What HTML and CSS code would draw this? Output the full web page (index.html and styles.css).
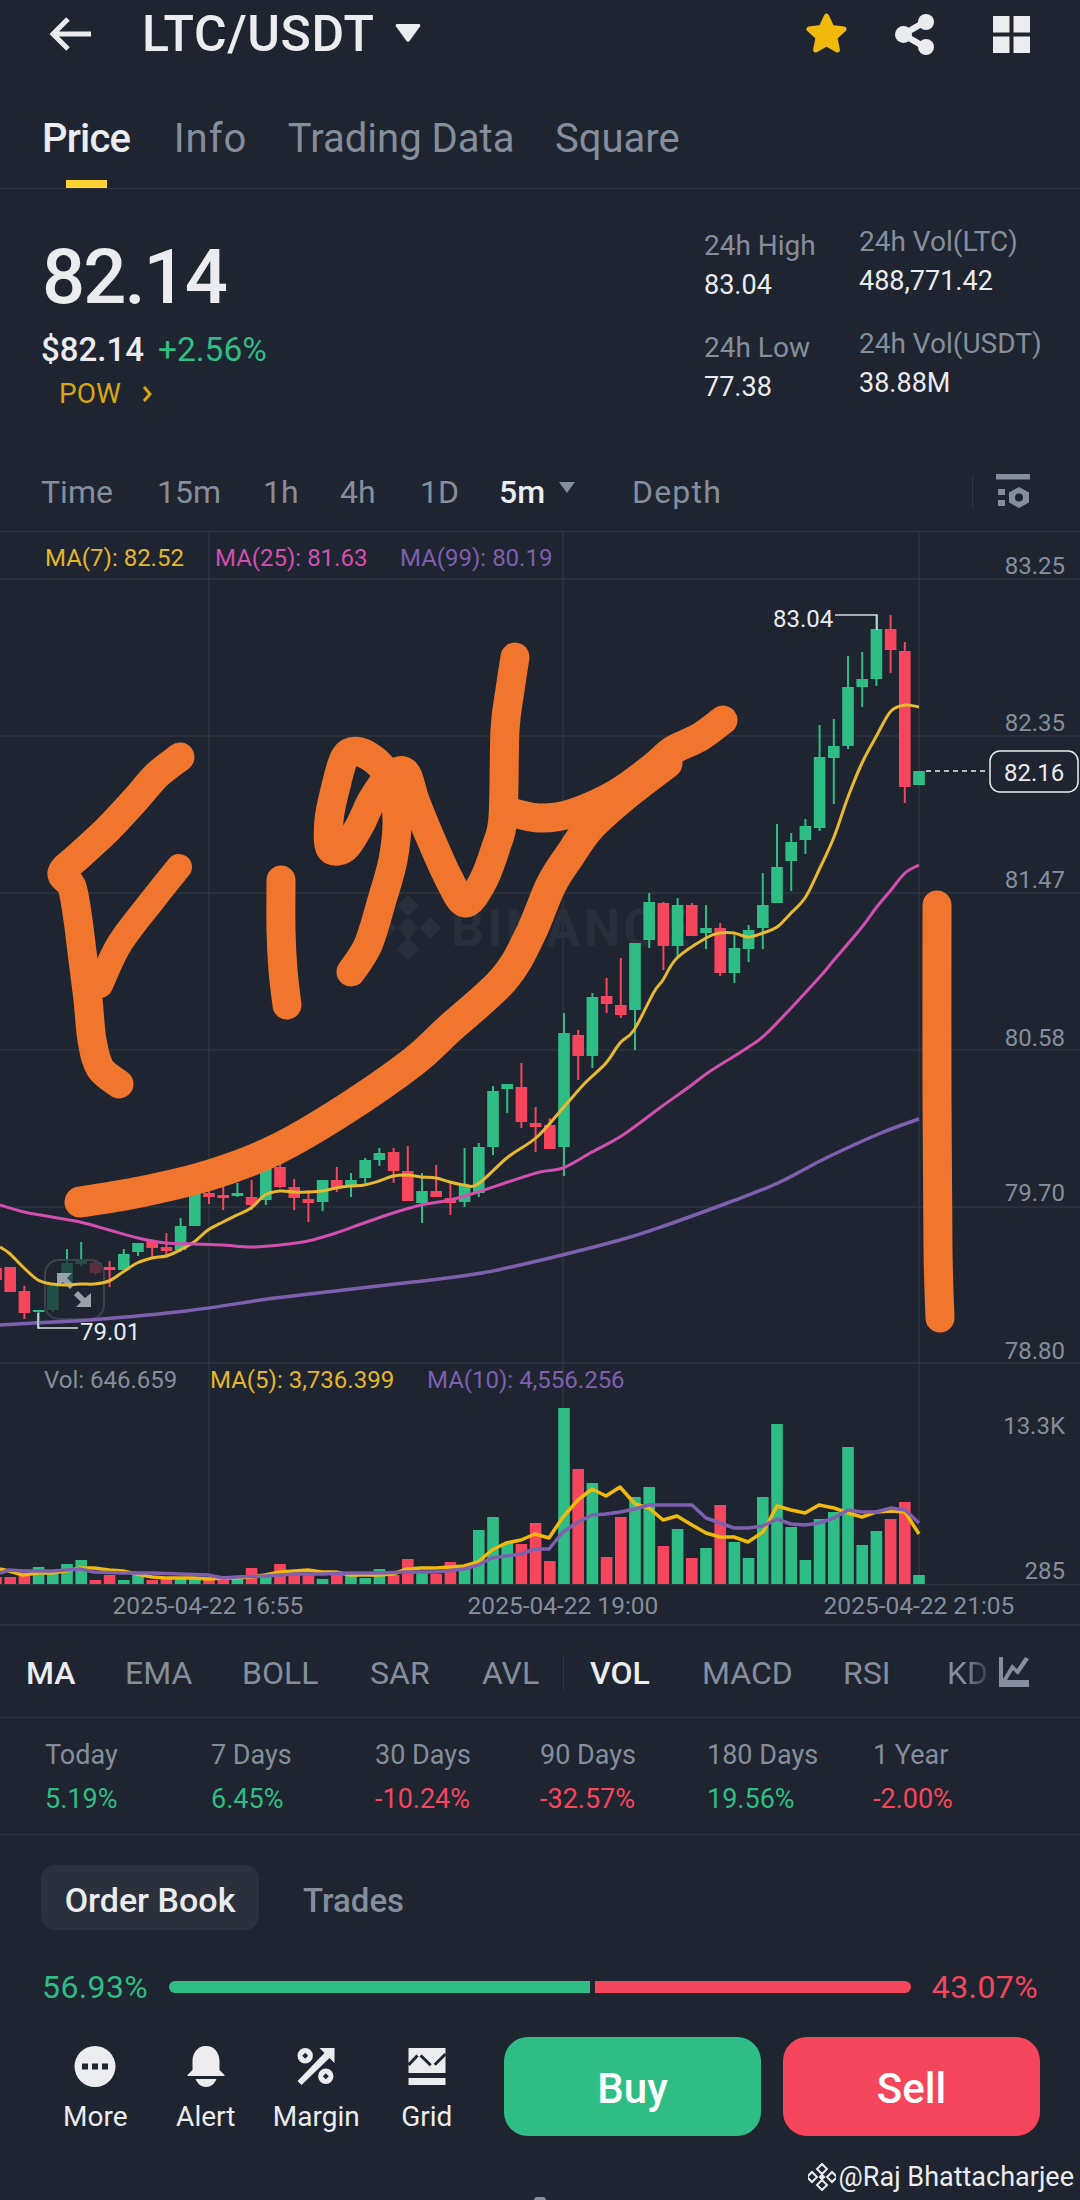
FILE: index.html
```html
<!DOCTYPE html>
<html lang="en">
<head>
<meta charset="utf-8">
<title>LTC/USDT</title>
<link rel="stylesheet" href="styles.css">
</head>
<body>
<div class="app">
  <header class="topbar">
    <svg class="ico back" viewBox="0 0 44 36"><path d="M42 18H5M19 3 4 18l15 15" fill="none" stroke="#eaecef" stroke-width="5"/></svg>
    <h1 class="pair">LTC/USDT</h1>
    <svg class="ico caret" viewBox="0 0 26 20"><path d="M2 1h22a1.500 1.500 0 0 1 1 2.500L14.500 18a2 2 0 0 1-3 0L1 3.500A1.500 1.500 0 0 1 2 1z" fill="#eaecef"/></svg>
    <span class="spacer"></span>
    <svg class="ico star" viewBox="0 0 41 42"><path d="M20.500 3l5.300 11.600 12.200 1.500-9 8.400 2.400 12.500-10.900-6.200L9.600 37l2.400-12.500-9-8.400 12.200-1.500z" fill="#f0b90b" stroke="#f0b90b" stroke-width="5" stroke-linejoin="round"/></svg>
    <svg class="ico share" viewBox="0 0 39 41"><g fill="#eaecef"><circle cx="31" cy="8" r="8"/><circle cx="8.500" cy="20.500" r="8.500"/><circle cx="31" cy="33" r="8"/><path d="M29.500 4.500l3 5.500L10 23l-3-5.500zM10 18l22.500 13-3 5.500L7 23.500z"/></g></svg>
    <svg class="ico apps" viewBox="0 0 37 37"><g fill="#eaecef"><rect width="16.500" height="16.500"/><rect x="20.500" width="16.500" height="16.500"/><rect y="20.500" width="16.500" height="16.500"/><rect x="20.500" y="20.500" width="16.500" height="16.500"/></g></svg>
  </header>

  <nav class="tabs">
    <a class="tab on">Price</a>
    <a class="tab info">Info</a>
    <a class="tab data">Trading Data</a>
    <a class="tab">Square</a>
  </nav>

  <section class="ticker">
    <div class="quote">
      <div class="last">82.14</div>
      <div class="fiat"><span class="usd">$82.14</span><span class="up">+2.56%</span></div>
      <div class="tag">POW<svg class="chev" viewBox="0 0 10 18"><path d="M2 2l6 7-6 7" fill="none" stroke="#d9a514" stroke-width="3"/></svg></div>
    </div>
    <div class="stats">
      <div class="stat"><span class="k">24h High</span><span class="v">83.04</span></div>
      <div class="stat shift"><span class="k">24h Vol(LTC)</span><span class="v">488,771.42</span></div>
      <div class="stat"><span class="k">24h Low</span><span class="v">77.38</span></div>
      <div class="stat shift"><span class="k">24h Vol(USDT)</span><span class="v">38.88M</span></div>
    </div>
  </section>

  <div class="intervals">
    <span class="iv w-time">Time</span>
    <span class="iv w-15">15m</span>
    <span class="iv w-1h">1h</span>
    <span class="iv w-4h">4h</span>
    <span class="iv w-1d">1D</span>
    <span class="iv now">5m</span>
    <svg class="tri" viewBox="0 0 18 13"><path d="M1 1h16L9 12z" fill="#848e9c"/></svg>
    <span class="iv depth">Depth</span>
    <span class="spacer"></span>
    <i class="vr"></i>
    <svg class="cfg" viewBox="0 0 34 34"><g fill="#848e9c"><rect width="34" height="5.500"/><rect x="2" y="15" width="7" height="6"/><rect x="2" y="26" width="7" height="6"/><path fill-rule="evenodd" d="M23 13l10 5.500v10L23 34l-10-5.500v-10zm0 6.500a4 4 0 1 0 0 8 4 4 0 0 0 0-8z"/></g></svg>
  </div>

  <svg class="chart" viewBox="0 532 1080 1094">
    <g class="grid">
      <path d="M0 579H1080M0 736H1080M0 893H1080M0 1050H1080M0 1207H1080M0 1363H1080M0 1584.500H1080M0 1625H1080"/>
      <path d="M209 532V1584M563 532V1584M919 532V1584"/>
    </g>
    <g class="wm">
      <path d="M408 895l11 11-11 11-11-11zM408 938l11 11-11 11-11-11zM386 917l11 11-11 11-11-11zM430 917l11 11-11 11-11-11zM408 917l11 11-11 11-11-11z"/>
      <text x="451" y="946">BINANCE</text>
    </g>

    <g id="vol"></g>
    <polyline class="ln y" points="919,1534 905,1512 891,1511 876,1512 862,1517 848,1513 834,1508 819,1505 805,1513 791,1510 777,1506 763,1532 748,1542 734,1537 720,1537 706,1533 692,1525 677,1516 663,1520 649,1508 635,1504 620,1487 606,1496 592,1489 578,1500 563,1517 549,1538 535,1534 521,1540 506,1543 492,1550 478,1562 464,1566 450,1567 436,1568 421,1568 407,1569 393,1574 379,1575 364,1575 350,1575 336,1572 322,1572 308,1570 294,1571 280,1572 265,1575 251,1577 237,1578 223,1578 208,1579 194,1578 180,1578 166,1578 152,1577 137,1574 123,1571 109,1570 94,1568 80,1568 66,1571 52,1573 38,1573 23,1575 9,1571 0,1569"/>
    <polyline class="ln p" points="919,1523 905,1510 891,1508 876,1512 862,1512 848,1510 834,1518 819,1523 805,1525 791,1524 777,1519 763,1526 748,1528 734,1528 720,1523 706,1518 692,1505 677,1505 663,1505 649,1505 635,1509 620,1512 606,1514 592,1515 578,1522 563,1532 549,1549 535,1549 521,1554 506,1556 492,1558 478,1565 464,1569 436,1572 407,1572 379,1573 350,1573 322,1574 294,1574 265,1576 237,1577 223,1578 208,1575 180,1574 152,1573 123,1573 94,1572 80,1569 52,1571 23,1571 9,1570 0,1573"/>
    <g id="candles"></g>
    <rect class="fs" x="45" y="1260" width="59" height="59" rx="14"/>
    <g class="fsa"><path d="M57 1273h15l-5 5 7 7-4 4-7-7-6 5zM91 1307H76l5-5-7-7 4-4 7 7 6-5z"/></g>
    <polyline class="ln2 y" points="919,707 905,705 891,711 877,735 862,763 848,797 834,837 819,870 805,898 791,913 777,927 763,933 748,937 734,933 720,933 706,938 677,958 663,980 654,992 634,1030 620,1043 606,1063 585,1083 563,1108 537,1137 508,1157 478,1184 464,1185 450,1182 436,1178 421,1177 407,1175 393,1176 379,1181 364,1185 350,1186 336,1188 322,1191 308,1192 294,1192 280,1191 265,1195 251,1208 237,1215 223,1222 208,1230 194,1242 180,1250 166,1256 152,1258 137,1263 123,1272 109,1281 94,1284 80,1284 66,1285 52,1284 38,1280 23,1267 9,1253 0,1247"/>
    <polyline class="ln2 m" points="919,865 905,873 891,890 876,908 862,927 834,960 817,980 768,1032 747,1048 709,1072 689,1087 661,1107 623,1135 592,1152 563,1168 540,1172 508,1182 478,1192 450,1200 421,1205 393,1213 364,1223 336,1233 308,1241 280,1245 251,1247 223,1245 194,1244 166,1243 138,1238 109,1230 80,1222 52,1217 24,1212 0,1205"/>
    <polyline class="ln2 v" points="919,1119 881,1133 826,1158 778,1183 730,1202 661,1227 620,1240 558,1256 482,1273 413,1282 344,1290 275,1298 186,1311 90,1320 34,1323 0,1325"/>

    <path class="hl" d="M835 615H877V630"/>
    <path class="hl" d="M38 1313V1328H78"/>
    <path class="dash" d="M926 771H988"/>
    <rect class="box" x="990" y="751" width="88" height="41" rx="10"/>
    <g class="t-white">
      <text x="773" y="627">83.04</text>
      <text x="80" y="1340">79.01</text>
      <text x="1004" y="781">82.16</text>
    </g>
    <g class="t-axis">
      <text x="1065" y="574">83.25</text>
      <text x="1065" y="731">82.35</text>
      <text x="1065" y="888">81.47</text>
      <text x="1065" y="1046">80.58</text>
      <text x="1065" y="1201">79.70</text>
      <text x="1065" y="1359">78.80</text>
      <text x="1065" y="1434">13.3K</text>
      <text x="1065" y="1579">285</text>
    </g>
    <g class="t-leg">
      <text x="45" y="566" class="cy">MA(7): 82.52</text>
      <text x="215" y="566" class="cm">MA(25): 81.63</text>
      <text x="400" y="566" class="cv">MA(99): 80.19</text>
      <text x="44" y="1388" class="cg">Vol: 646.659</text>
      <text x="210" y="1388" class="cy">MA(5): 3,736.399</text>
      <text x="427" y="1388" class="cv">MA(10): 4,556.256</text>
    </g>
    <g class="t-date">
      <text x="208" y="1614">2025-04-22 16:55</text>
      <text x="563" y="1614">2025-04-22 19:00</text>
      <text x="919" y="1614">2025-04-22 21:05</text>
    </g>

    <g class="ink">
      <path d="M180 757 157 775 135 800 107 830 80 855 62 873 72 887 78 920 83 960 88 1000 92 1040 100 1068 119 1084"/>
      <path class="thin" d="M179 867 155 897 120 943 100 985"/>
      <path d="M281 880 281 930 283 970 287 1005"/>
      <path d="M351 972 368 945 382 900 393 860 397 820 392 785 380 765 360 752 345 757 335 790 329 820 330 848 345 848 360 825 372 800 388 778 405 772 415 800 427 830 448 877 465 903 482 883 496 847 503 817 505 730 510 690 515 657"/>
      <path d="M510 812 540 818 573 813 617 793 653 767 673 750 700 737 723 720"/>
      <path class="big" d="M80 1202 140 1192 210 1175 275 1150 344 1110 413 1062 448 1030 503 980 530 935 551 885 570 855 590 827 623 797 667 763"/>
      <path class="wide" d="M937 905 937 1100 938 1250 940 1318"/>
    </g>
  </svg>

  <div class="inds">
    <span class="ind on i-ma">MA</span>
    <span class="ind i-ema">EMA</span>
    <span class="ind i-boll">BOLL</span>
    <span class="ind i-sar">SAR</span>
    <span class="ind i-avl">AVL</span>
    <i class="vr tall"></i>
    <span class="ind on i-vol">VOL</span>
    <span class="ind i-macd">MACD</span>
    <span class="ind i-rsi">RSI</span>
    <span class="ind i-kd">KD</span>
    <svg class="mtn" viewBox="0 0 30 30"><g fill="#848e9c"><path d="M0 0h4v22l9-15 5 5L26 0l4 2-11 16-5-5-6 10h22v7H0z"/></g></svg>
  </div>

  <div class="perf">
    <div class="pc"><span class="k">Today</span><span class="up">5.19%</span></div>
    <div class="pc"><span class="k">7 Days</span><span class="up">6.45%</span></div>
    <div class="pc"><span class="k">30 Days</span><span class="dn">-10.24%</span></div>
    <div class="pc"><span class="k">90 Days</span><span class="dn">-32.57%</span></div>
    <div class="pc"><span class="k">180 Days</span><span class="up">19.56%</span></div>
    <div class="pc"><span class="k">1 Year</span><span class="dn">-2.00%</span></div>
  </div>

  <div class="book">
    <span class="pill">Order Book</span>
    <span class="trades">Trades</span>
  </div>

  <div class="ratio">
    <span class="up">56.93%</span>
    <div class="bar"><i class="bid"></i><i class="ask"></i></div>
    <span class="dn">43.07%</span>
  </div>

  <div class="actions">
    <div class="act">
      <svg class="aico" viewBox="0 0 42 42"><circle cx="21" cy="20.500" r="20.500" fill="#eaecef"/><g fill="#1e2530"><rect x="8" y="17.500" width="6" height="6"/><rect x="18" y="17.500" width="6" height="6"/><rect x="28" y="17.500" width="6" height="6"/></g></svg>
      <span>More</span>
    </div>
    <div class="act">
      <svg class="aico" viewBox="0 0 42 42"><g fill="#eaecef" transform="translate(2.500 0)"><path d="M18.500 0C28 0 32 8 32 15v9l5 5v1H0v-1l5-5v-9C5 8 9 0 18.500 0z"/><path d="M8 33h21c-2 5-6 8-10.500 8S10 38 8 33z"/></g></svg>
      <span>Alert</span>
    </div>
    <div class="act">
      <svg class="aico" viewBox="0 0 42 42"><g fill="#eaecef" transform="translate(2.500 2)"><path fill-rule="evenodd" d="M7.700 0a7.700 7.700 0 1 1 0 15.400A7.700 7.700 0 0 1 7.700 0zm0 4.700l3 3-3 3-3-3zM28.300 20.600a7.700 7.700 0 1 1 0 15.400 7.700 7.700 0 0 1 0-15.400zm0 4.700l3 3-3 3-3-3z"/><path d="M22 0h15v15l-5-5L4 37l-4-4L27 5z"/></g></svg>
      <span>Margin</span>
    </div>
    <div class="act">
      <svg class="aico" viewBox="0 0 42 42"><g transform="translate(2.500 2)"><path d="M0 0h37v25H0zM0 30h37v7H0z" fill="#eaecef"/><path d="M0 17 10.500 6 24 19 37 6" fill="none" stroke="#1e2530" stroke-width="3"/><path d="M10.500 2l3.500 3.500-3.500 3.500L7 5.500zM24.500 15l3.500 3.500-3.500 3.500-3.500-3.500z" fill="#eaecef"/></g></svg>
      <span>Grid</span>
    </div>
    <button class="btn buy">Buy</button>
    <button class="btn sell">Sell</button>
  </div>

  <div class="mark">
    <svg class="logo" viewBox="0 0 28 28"><path d="M14 1l5 5-5 5-5-5zM14 17l5 5-5 5-5-5zM4 9l5 5-5 5-5-5zM24 9l5 5-5 5-5-5z" fill="none" stroke="#eaecef" stroke-width="2"/><path d="M14 10.500l3.500 3.500-3.500 3.500-3.500-3.500z" fill="#eaecef"/></svg>
    <span>@Raj Bhattacharjee</span>
  </div>
  <i class="home"></i>
</div>
<script src="chart.js"></script>
</body>
</html>
```

FILE: styles.css
```css
* { box-sizing: border-box; }
html, body { margin: 0; padding: 0; background: #1e2530; }
body { font-family: Roboto, "Noto Sans", sans-serif; color: #eaecef; }
.app { position: relative; width: 1080px; height: 2200px; overflow: hidden; }
.spacer { flex: 1; }
.ico { display: block; flex: none; }
.home { position: absolute; left: 534px; bottom: 0; width: 12px; height: 3px; border-radius: 6px 6px 0 0; background: #848e9c; }

.topbar { height: 68px; display: flex; align-items: center; padding: 0 50px 0 49px; }
.back { width: 44px; height: 36px; }
.pair { margin: 0 0 0 49px; font-size: 50px; font-weight: 500; letter-spacing: .6px; line-height: 68px; }
.caret { width: 26px; height: 20px; margin-left: 20px; margin-bottom: 2px; }
.star { width: 41px; height: 42px; margin-right: 48px; }
.share { width: 39px; height: 41px; margin-right: 59px; }
.apps { width: 37px; height: 37px; }

.tabs { height: 121px; display: flex; gap: 40.500px; padding: 0 42px; border-bottom: 1px solid #2e3540; align-items: flex-start; }
.tab { position: relative; font-size: 40px; line-height: 48px; margin-top: 47px; color: #848e9c; }
.tab.on { color: #eaecef; font-weight: 500; letter-spacing: -.8px; margin-right: 3px; }
.tab.info { letter-spacing: 1px; }
.tab.data { letter-spacing: 0; }
.tab.on::after { content: ""; position: absolute; left: 24px; top: 65px; width: 41px; height: 8px; background: #fcd535; }

.ticker { height: 260px; display: flex; justify-content: space-between; padding: 0 0 0 42px; }
.last { font-size: 76px; font-weight: 500; line-height: 76px; margin-top: 50px; letter-spacing: -2px; }
.fiat { display: flex; gap: 14px; font-size: 33.500px; line-height: 40px; margin: 15px 0 0 -1px; }
.fiat .usd { font-weight: 500; font-size: 33px; }
.fiat .up { color: #2ebd85; }
.tag { display: flex; align-items: center; gap: 21px; margin: 6px 0 0 17px; color: #d9a514; font-size: 28px; line-height: 36px; }
.chev { width: 10px; height: 18px; }
.stats { display: grid; grid-template-columns: 155px 221px; grid-auto-rows: 102px; margin-top: 39px; width: 376px; }
.stat { display: flex; flex-direction: column; gap: 4px; }
.stat.shift { margin-top: -4px; }
.stat .k { font-size: 28px; line-height: 36px; color: #848e9c; }
.stat .v { font-size: 27px; line-height: 34px; color: #eaecef; }

.intervals { height: 83px; display: flex; align-items: center; padding: 3px 50px 0 41px; border-bottom: 1px solid #2e3540; font-size: 32px; color: #848e9c; }
.iv { line-height: 40px; }
.w-time { width: 116px; }
.w-15 { width: 106px; }
.w-1h { width: 77px; }
.w-4h { width: 80px; }
.w-1d { width: 79px; }
.now { width: 59px; color: #eaecef; font-weight: 500; }
.tri { width: 18px; height: 13px; margin-top: -8px; }
.depth { margin-left: 56px; letter-spacing: 1.2px; }
.vr { display: block; width: 1px; height: 34px; background: #2e3540; }
.cfg { width: 34px; height: 34px; margin-left: 23px; margin-top: -2px; }

.chart { display: block; width: 1080px; height: 1094px; font-family: Roboto, sans-serif; }
.grid path { stroke: #2e3540; stroke-width: 1.500; fill: none; }
.wm path { fill: #282f3a; }
.wm text { font-size: 52px; font-weight: 700; fill: #282f3a; letter-spacing: 3px; }
.ln, .ln2 { fill: none; stroke-width: 3; stroke-linejoin: round; }
.ln { stroke-width: 3.500; }
.y { stroke: #f0b90b; }
.ln2.y { stroke: #e8b92e; }
.p { stroke: #7e5fb0; }
.m { stroke: #d24fb0; }
.v { stroke: #7e5fb0; stroke-width: 3.500; }
.fs { fill: rgba(30, 37, 48, .72); stroke: #3a424c; stroke-width: 2; }
.fsa path { fill: #99a2ab; }
.hl { fill: none; stroke: #d8dce0; stroke-width: 1.500; }
.dash { stroke: #eaecef; stroke-width: 1.500; stroke-dasharray: 5 4; }
.box { fill: #1e2530; stroke: #eaecef; stroke-width: 1.500; }
.t-white text { font-size: 24px; fill: #eaecef; }
.t-axis text { font-size: 24px; fill: #848e9c; text-anchor: end; }
.t-leg text { font-size: 24px; }
.t-date text { font-size: 24.500px; fill: #848e9c; text-anchor: middle; }
.cy { fill: #e5b52c; }
.cm { fill: #d24fb0; }
.cv { fill: #7e5fb0; }
.cg { fill: #848e9c; }
.ink path { fill: none; stroke: #f0762d; stroke-width: 29; stroke-linecap: round; stroke-linejoin: round; }
.ink .thin { stroke-width: 26; }
.ink .wide { stroke-width: 29; }
.ink .big { stroke-width: 31; }
.cg-up { fill: #2ebd85; stroke: #2ebd85; stroke-width: 0; }
.cg-dn { fill: #f6465d; stroke: #f6465d; stroke-width: 0; }

.inds { height: 92px; display: flex; align-items: center; position: relative; padding: 2px 0 0 26px; border-bottom: 1px solid #2e3540; font-size: 32px; color: #848e9c; }
.ind { line-height: 40px; flex: none; }
.ind.on { color: #eaecef; font-weight: 500; }
.i-ma { width: 99px; }
.i-ema { width: 117px; }
.i-boll { width: 128px; }
.i-sar { width: 112px; }
.i-avl { width: 81px; }
.vr.tall { margin-right: 26px; }
.i-vol { width: 112px; }
.i-macd { width: 141px; }
.i-rsi { width: 104px; }
.i-kd { width: 44px; background: linear-gradient(90deg, #848e9c 40%, #2a313c); -webkit-background-clip: text; background-clip: text; color: transparent; }
.mtn { width: 30px; height: 30px; margin-left: 8px; margin-top: -2px; }

.perf { height: 117px; display: grid; grid-template-columns: 166px 164px 165px 167px 166px 150px; padding: 20px 0 0 45px; border-bottom: 1px solid #2e3540; font-size: 27px; }
.pc { display: flex; flex-direction: column; gap: 10px; }
.pc .k { color: #848e9c; line-height: 34px; }
.pc span { line-height: 34px; }
.up { color: #2ebd85; }
.dn { color: #f6465d; }

.book { display: flex; align-items: flex-start; gap: 44px; padding: 30px 0 0 41px; }
.pill { width: 218px; height: 65px; border-radius: 14px; background: #2a313c; display: flex; align-items: center; justify-content: center; padding-top: 4px; font-size: 34px; font-weight: 500; }
.trades { height: 65px; padding-top: 2px; font-size: 33px; font-weight: 500; color: #848e9c; line-height: 67px; }

.ratio { display: flex; align-items: center; gap: 21px; padding: 0 42px; height: 40px; margin-top: 37px; font-size: 32px; letter-spacing: .4px; }
.bar { flex: 1; display: flex; gap: 5px; height: 12px; }
.bid { flex: 419 1 0; background: #2ebd85; border-radius: 6px 0 0 6px; }
.ask { flex: 315 1 0; background: #f6465d; border-radius: 0 6px 6px 0; }

.actions { display: flex; align-items: flex-start; margin-top: 30px; padding-left: 40px; height: 99px; }
.act { width: 110.500px; display: flex; flex-direction: column; align-items: center; padding-top: 9px; font-size: 28px; color: #eaecef; flex: none; }
.act span { line-height: 34px; margin-top: 12px; }
.aico { width: 42px; height: 42px; display: block; }
.btn { width: 257px; height: 99px; border: 0; border-radius: 24px; padding-top: 4px; font: 500 42px Roboto, sans-serif; color: #fff; flex: none; }
.buy { background: #2ebd85; margin-left: 22px; }
.sell { background: #f6465d; margin-left: 22px; }

.mark { display: flex; align-items: center; justify-content: flex-end; gap: 3px; padding-right: 6px; margin-top: 22px; font-size: 27px; line-height: 38px; }
.logo { width: 28px; height: 28px; }
```

FILE: chart.js
```js
// Candles and volume, newest first; each sits one slot (14.2px) to the left of the previous.
var SLOT = 14.2, LAST_X = 919, BASE = 1584;
var candles = [
 [771,785,771,785,'g'],[651,787,642,803,'r'],[629,650,615,673,'r'],[629,679,615,686,'g'],[679,687,652,707,'g'],
 [687,746,656,749,'g'],[746,758,719,804,'g'],[757,828,725,831,'g'],[826,840,819,854,'g'],[842,861,833,891,'g'],
 [867,903,824,903,'g'],[905,928,873,949,'g'],[930,949,925,962,'g'],[948,973,935,983,'g'],[928,973,923,976,'r'],
 [928,933,905,949,'g'],[905,936,903,936,'r'],[905,946,898,957,'g'],[903,946,902,970,'r'],[902,940,893,948,'g'],
 [943,1010,943,1050,'g'],[1005,1015,958,1018,'r'],[996,1004,978,1013,'r'],[997,1056,993,1068,'g'],[1035,1056,1030,1080,'r'],
 [1033,1147,1013,1176,'g'],[1125,1149,1118,1149,'r'],[1123,1127,1107,1152,'r'],[1087,1122,1063,1128,'r'],[1084,1089,1084,1113,'g'],
 [1091,1147,1086,1155,'g'],[1147,1193,1143,1197,'g'],[1185,1202,1148,1207,'g'],[1198,1203,1183,1215,'r'],[1191,1197,1165,1197,'r'],
 [1191,1203,1173,1223,'g'],[1171,1201,1146,1201,'r'],[1152,1171,1148,1183,'r'],[1153,1160,1148,1166,'g'],[1160,1178,1158,1183,'g'],
 [1180,1185,1173,1197,'g'],[1180,1187,1167,1192,'r'],[1180,1202,1180,1211,'g'],[1199,1203,1190,1222,'r'],[1187,1198,1179,1210,'r'],
 [1167,1187,1162,1188,'r'],[1167,1200,1160,1205,'g'],[1197,1205,1180,1210,'r'],[1193,1196,1183,1197,'g'],[1195,1198,1183,1210,'r'],
 [1193,1197,1187,1204,'r'],[1193,1226,1193,1226,'g'],[1226,1250,1218,1252,'g'],[1247,1251,1233,1258,'r'],[1241,1248,1241,1257,'r'],
 [1243,1252,1243,1256,'g'],[1254,1270,1249,1270,'g'],[1267,1270,1261,1287,'r'],[1263,1273,1260,1275,'r'],[1260,1264,1242,1266,'g'],
 [1263,1283,1249,1283,'g'],[1283,1310,1283,1312,'g'],[1310,1312,1310,1328,'g'],[1291,1313,1286,1319,'r'],[1267,1292,1267,1292,'r'],[1268,1280,1265,1282,'r']
];
var volumes = [
 [1575,'g'],[1502,'r'],[1519,'r'],[1531,'g'],[1545,'g'],[1447,'g'],[1512,'g'],[1519,'g'],[1560,'g'],[1527,'g'],
 [1424,'g'],[1497,'g'],[1558,'g'],[1542,'g'],[1505,'r'],[1548,'g'],[1558,'r'],[1529,'g'],[1546,'r'],[1487,'g'],
 [1497,'g'],[1517,'r'],[1557,'r'],[1483,'g'],[1469,'r'],[1408,'g'],[1561,'r'],[1523,'r'],[1544,'r'],[1543,'g'],
 [1517,'g'],[1530,'g'],[1567,'g'],[1562,'r'],[1574,'r'],[1572,'g'],[1559,'r'],[1575,'r'],[1569,'g'],[1578,'g'],
 [1575,'g'],[1575,'r'],[1579,'g'],[1574,'r'],[1575,'r'],[1564,'r'],[1575,'g'],[1568,'r'],[1578,'g'],[1578,'r'],
 [1578,'r'],[1577,'g'],[1577,'g'],[1577,'r'],[1580,'r'],[1574,'g'],[1580,'g'],[1575,'r'],[1580,'r'],[1560,'g'],
 [1564,'g'],[1573,'g'],[1567,'g'],[1575,'r'],[1577,'r'],[1577,'r']
];
var NS = 'http://www.w3.org/2000/svg';
function rect(parent, x, y, w, h, cls) {
  var r = document.createElementNS(NS, 'rect');
  r.setAttribute('x', x); r.setAttribute('y', y);
  r.setAttribute('width', w); r.setAttribute('height', Math.max(h, 0));
  r.setAttribute('class', cls);
  parent.appendChild(r);
}
var cg = document.getElementById('candles');
candles.forEach(function (c, i) {
  var x = LAST_X - SLOT * i, cls = c[4] === 'g' ? 'cg-up' : 'cg-dn';
  rect(cg, x - 1, c[2], 2, c[3] - c[2], cls);
  rect(cg, x - 5.8, c[0], 11.6, c[1] - c[0], cls);
});
var vg = document.getElementById('vol');
volumes.forEach(function (v, i) {
  var x = LAST_X - SLOT * i, cls = v[1] === 'g' ? 'cg-up' : 'cg-dn';
  rect(vg, x - 5.8, v[0], 11.6, BASE - v[0], cls);
});

// Catmull-Rom smoothing for the moving averages and the hand-drawn strokes.
function smooth(nums) {
  var p = [], i;
  for (i = 0; i + 1 < nums.length; i += 2) p.push([nums[i], nums[i + 1]]);
  var d = 'M' + p[0][0] + ' ' + p[0][1];
  for (i = 0; i < p.length - 1; i++) {
    var a = p[Math.max(i - 1, 0)], b = p[i], c = p[i + 1], e = p[Math.min(i + 2, p.length - 1)];
    d += 'C' + (b[0] + (c[0] - a[0]) / 6).toFixed(1) + ' ' + (b[1] + (c[1] - a[1]) / 6).toFixed(1) + ' ' +
         (c[0] - (e[0] - b[0]) / 6).toFixed(1) + ' ' + (c[1] - (e[1] - b[1]) / 6).toFixed(1) + ' ' + c[0] + ' ' + c[1];
  }
  return d;
}
function numbers(s) { return s.match(/-?\d+(\.\d+)?/g).map(Number); }
document.querySelectorAll('.ink path').forEach(function (el) {
  el.setAttribute('d', smooth(numbers(el.getAttribute('d'))));
});
document.querySelectorAll('polyline.ln2').forEach(function (el) {
  var path = document.createElementNS(NS, 'path');
  path.setAttribute('class', el.getAttribute('class'));
  path.setAttribute('d', smooth(numbers(el.getAttribute('points'))));
  el.parentNode.replaceChild(path, el);
});
```
